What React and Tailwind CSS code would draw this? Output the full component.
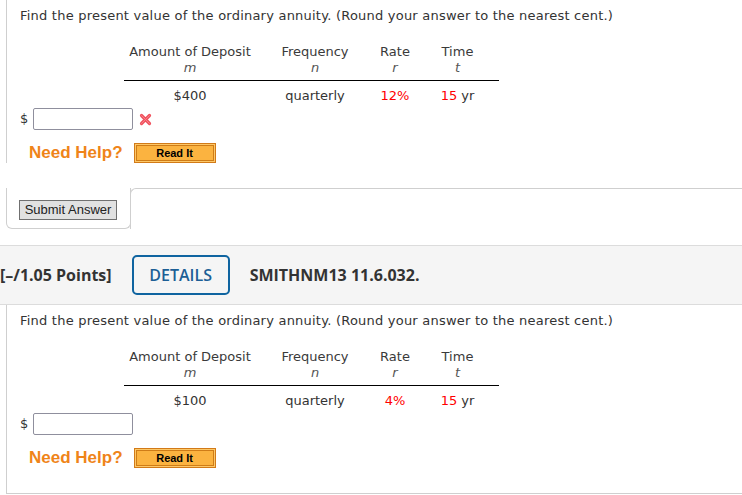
import React from "react";

const body = { fontFamily: '"DejaVu Sans", Verdana, sans-serif' };

function RedX() {
  return (
    <svg width="13" height="13" viewBox="0 0 13 13" className="ml-[6px]">
      <path d="M2.5 2.5 L10.5 10.5 M10.5 2.5 L2.5 10.5" stroke="#f0505c" strokeWidth="3.2" strokeLinecap="round" />
      <path d="M2.5 2.5 L10.5 10.5 M10.5 2.5 L2.5 10.5" stroke="#f7808a" strokeWidth="1" strokeLinecap="round" />
    </svg>
  );
}

function ReadIt() {
  return (
    <div className="ml-[11px] w-[82px] h-[20px] border border-[#d27a18] bg-[#fdc868] p-[1px]">
      <div className="h-full border border-[#cf7c17] bg-[#fbb340] flex items-center justify-center text-[11px] font-bold text-black leading-none font-['Liberation_Sans',Arial,sans-serif]">
        Read It
      </div>
    </div>
  );
}

function Problem({ amount, rate, wrong }) {
  return (
    <div style={body}>
      <p className="pt-[8px] pl-[13px] text-[13px] tracking-[0.22px] leading-[16px] text-[#333] whitespace-nowrap">
        Find the present value of the ordinary annuity. (Round your answer to the nearest cent.)
      </p>

      <div className="mt-[20px] ml-[117px] w-[375px] text-[13px] leading-[16px]">
        <div className="grid grid-cols-[132px_118px_42px_83px] border-b border-black pb-[4px] text-center text-[#3a3a3a]">
          <div>Amount of Deposit</div>
          <div>Frequency</div>
          <div>Rate</div>
          <div>Time</div>
          <div className="italic text-[#555]">m</div>
          <div className="italic text-[#555]">n</div>
          <div className="italic text-[#555]">r</div>
          <div className="italic text-[#555]">t</div>
        </div>
        <div className="grid grid-cols-[132px_118px_42px_83px] pt-[7px] text-center text-[#333]">
          <div>{amount}</div>
          <div>quarterly</div>
          <div className="text-[#ff0000]">{rate}</div>
          <div>
            <span className="text-[#ff0000]">15</span> yr
          </div>
        </div>
      </div>

      <div className="mt-[4px] pl-[13px] flex items-center h-[22px]">
        <span className="text-[13px] text-[#333] w-[13px]">$</span>
        <div className="w-[100px] h-[22px] border border-[#8f8f9d] rounded-[2px] bg-white" />
        {wrong && <RedX />}
      </div>

      <div className="mt-[13px] pl-[22px] flex items-center h-[20px]">
        <span className="text-[17px] font-bold text-[#ef8419] font-['Liberation_Sans',Arial,sans-serif]">Need Help?</span>
        <ReadIt />
      </div>
    </div>
  );
}

export default function App() {
  return (
    <div className="w-[742px] h-[495px] overflow-hidden bg-white">
      <div className="ml-[6px]">
        <div className="border-l border-[#cfcfcf]">
          <Problem amount="$400" rate="12%" wrong />
        </div>
        <div className="mt-[25px] flex">
          <div className="w-[125px] h-[41px] border-l border-r border-b border-[#cfcfcf] rounded-b-[6px] pt-[12px] pl-[12px]">
            <div className="w-[98px] h-[20px] border border-[#707070] bg-[#e1e1e1] flex items-center justify-center text-[13px] text-[#222] font-['Liberation_Sans',Arial,sans-serif]">
              Submit Answer
            </div>
          </div>
          <div className="flex-1 -ml-px h-[41px] border-t border-l border-[#cfcfcf] rounded-tl-[6px]" />
        </div>
      </div>

      <div className="mt-[16px] h-[60px] border-t border-b border-[#dcdcdc] bg-[#f5f5f5] flex items-center font-['Open_Sans',sans-serif] text-[#333]">
        <span className="text-[16px] font-bold whitespace-nowrap">[–/1.05 Points]</span>
        <div className="ml-[20px] w-[98px] h-[40px] border-2 border-[#0f64a0] rounded-[5px] flex items-center justify-center text-[16px] font-semibold text-[#1c5f96]">
          DETAILS
        </div>
        <span className="ml-[20px] text-[16px] font-bold whitespace-nowrap">SMITHNM13 11.6.032.</span>
      </div>

      <div className="ml-[6px] h-[189px] border-l border-b border-[#cfcfcf]">
        <Problem amount="$100" rate="4%" />
      </div>
    </div>
  );
}
